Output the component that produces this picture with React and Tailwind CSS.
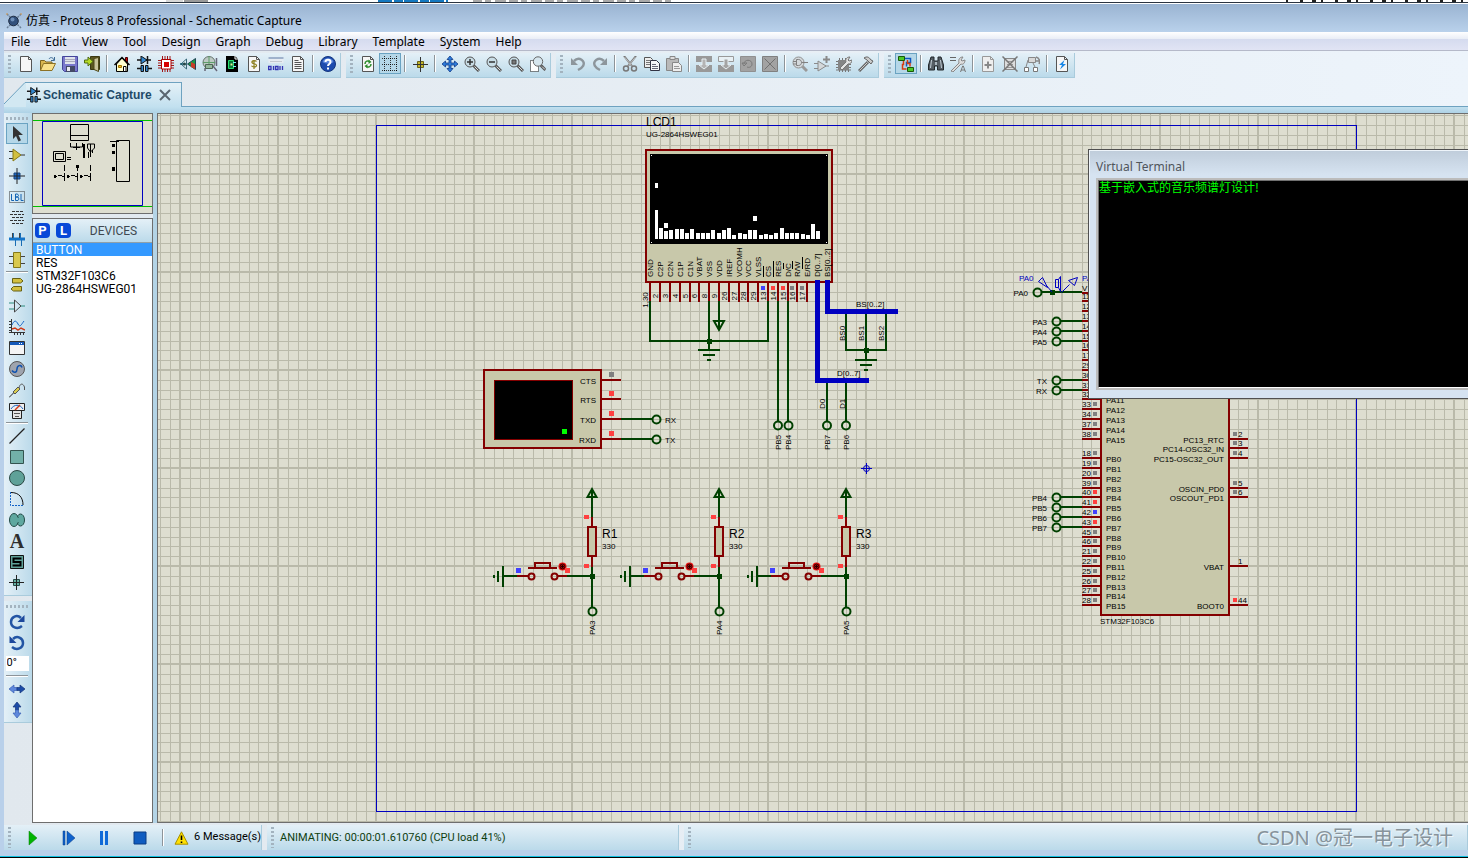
import React, { useState } from "react";

const RED = "#840000";
const GREEN = "#004000";
const BLUE = "#0000c0";
const BODY = "#c8c8aa";
const GRID = "#babaaa";

/* ---------- Iconos (16x16) ---------- */

const page = (
  <>
    <path d="M2.500 .5h8l3 3v12h-11z" fill="#f6f6f6" stroke="#555" />
    <path d="M10.500 .5v3h3" fill="none" stroke="#555" />
  </>
);

const grayPage = (
  <>
    <path d="M2.500 .5h8l3 3v12h-11z" fill="#eee" stroke="#999" />
    <path d="M10.500 .5v3h3" fill="none" stroke="#999" />
  </>
);

const lens = (
  <>
    <path d="M9.500 9.500l5.500 5.500" stroke="#555" strokeWidth="3" />
    <path d="M10.500 10.500l4 4" stroke="#ddd" strokeWidth="1" />
    <circle cx="6" cy="6" r="5" fill="#c9dde6" stroke="#555" />
  </>
);

const grayBlock = (
  <>
    <path d="M0 0h16v6H0zM0 9h16v7H0z" fill="#999" />
    <path d="M6 3h4v6h3l-5 4-5-4h3z" fill="#b4b4b4" stroke="#e6eef2" />
  </>
);

const icons = {
  newFile: page,
  open: (
    <>
      <path d="M.5 14.500V4.500h4l1.500 1.500h6v3" fill="#d8b650" stroke="#7d6520" />
      <path d="M.5 14.500l3-7h12l-3.500 7z" fill="#f8e08a" stroke="#8b7125" />
      <path d="M9 3c1-2 4-2 5 1M14.500 1v3.500H11" fill="none" stroke="#3f6a94" />
    </>
  ),
  save: (
    <>
      <path d="M.5 .5h15v15h-13l-2-2z" fill="#7a78cc" stroke="#45459a" />
      <path d="M3 1h10v7H3z" fill="#dfe3ec" />
      <path d="M3 3.500h10M3 5.500h10" stroke="#aab" />
      <path d="M4 10h9v6H4z" fill="#444a66" />
      <path d="M5 11h3v4H5z" fill="#e8e8f0" />
    </>
  ),
  exit: (
    <>
      <path d="M6.500 .5h9v13h-9z" fill="#5b5520" stroke="#3c3812" />
      <path d="M10 2.500l4.500-1v14l-4.500-2z" fill="#c9c39a" stroke="#4f4918" />
      <path d="M.5 4H4V1l5 4.500-5 4.500V7H.5z" fill="#b6dc28" stroke="#4f6b14" />
    </>
  ),
  home: (
    <>
      <path d="M11.500 1.500h2v6h-2z" fill="#d00000" stroke="#400" />
      <path d="M2.500 8v7.500h11V8L8 2z" fill="#ffffd0" stroke="#000" />
      <path d="M.5 9L8 1.500 15.500 9" fill="none" stroke="#000" strokeWidth="1.500" />
      <path d="M4.500 9.500h3v2h-3z" fill="#f4c020" stroke="#a07000" />
      <path d="M9.500 10.500h2.500v5H9.500z" fill="#fff" stroke="#000" />
    </>
  ),
  schematic: (
    <>
      <path d="M1 4h14" stroke="#111" strokeWidth="1.500" />
      <path d="M5 0v8l6-4z" fill="#3287d0" stroke="#111" />
      <path d="M11.500 0v8" stroke="#111" strokeWidth="1.500" />
      <path d="M1 12.500h4M12 12.500h4" stroke="#111" strokeWidth="1.500" />
      <path d="M5 9.500h2.500v6H5zM9.500 9.500H12v6H9.500z" fill="#3287d0" stroke="#111" />
    </>
  ),
  pcb: (
    <>
      <path d="M4.500 0v16M7 0v16M9.500 0v16M12 0v16M0 4.500h16M0 7h16M0 9.500h16M0 12h16" stroke="#a01818" />
      <path d="M3.500 3.500h9.500v9.500H3.500z" fill="#fff" stroke="#b00000" />
      <path d="M6 6h5v5H6z" fill="#d80000" />
    </>
  ),
  view3d: (
    <>
      <path d="M15.500 2.500v11L7.500 8z" fill="#189c48" stroke="#245" />
      <path d="M15 8l-4-2v5l4 2z" fill="#c83c28" />
      <path d="M6.500 3L1 8l5.500 5z" fill="#d9edf4" stroke="#3a6878" />
      <path d="M0 8h4" stroke="#165a6c" strokeWidth="1.500" />
      <circle cx="4.500" cy="8" r="1.500" fill="#244" />
    </>
  ),
  gerber: (
    <>
      <circle cx="7" cy="6.500" r="6" fill="#bdc9c4" stroke="#66746c" />
      <path d="M7 0v13M1 6.500h12" stroke="#5c9c68" />
      <path d="M11 10l4 5M3 12v3M14.500 2v8" stroke="#667" strokeWidth="1.500" fill="none" />
      <path d="M3.500 8.500h7v4h-7z" fill="#93b79b" stroke="#4e6656" />
    </>
  ),
  explorer: (
    <>
      <path d="M2 0h9l3 3v13H2z" fill="#000" />
      <path d="M4.500 4.500h5v8h-5z" fill="#0a7a3a" stroke="#28e070" />
      <path d="M9 6.500h3M9 10.500h3" stroke="#7ff0ff" />
      <path d="M6.500 7.500h2v2h-2z" fill="#e8f0a0" />
      <path d="M11 0v3h3" stroke="#fff" fill="none" />
    </>
  ),
  bom: (
    <>
      {page}
      <path d="M10.500 5.500c-1-1.500-5-1.200-4.500 1 .4 1.700 4.300.8 4.500 2.800.2 2-4 2.200-5 .5M8 4v9" fill="none" stroke="#8a7c18" strokeWidth="1.200" />
    </>
  ),
  source: (
    <>
      <path d="M.5 1h15v6H.5z" fill="#e6ebf2" />
      <path d="M.5 1h15v2H.5z" fill="#9fb2cc" />
      <path d="M.5 10.500h2.500v3H.5zM5.500 10v4M7.500 10.500H10v3H7.500zM12 10v4M14.500 10v4" fill="none" stroke="#3434b4" strokeWidth="1.300" />
      <path d="M2 5.500h12" stroke="#c3c8d0" />
    </>
  ),
  notes: (
    <>
      {page}
      <path d="M4.500 4.500h4M4.500 6.500h7M4.500 8.500h7M4.500 10.500h7M4.500 12.500h7" stroke="#555" />
    </>
  ),
  help: (
    <>
      <circle cx="8" cy="8" r="7.500" fill="#1e4cae" stroke="#14357e" />
      <path d="M2.500 6c1-5 10-5 11 0-3 2-8 2-11 0z" fill="#5e88dc" />
      <path d="M5.500 6c0-3 5-3 5 0 0 2-2.500 2-2.500 4M8 11.500v2" fill="none" stroke="#fff" strokeWidth="2" />
    </>
  ),
  redraw: (
    <>
      {page}
      <path d="M5 8c0-3 3-4 5-2M11 8c0 3-3 4-5 2" fill="none" stroke="#2c8c2c" strokeWidth="1.500" />
      <path d="M8.500 3.500l3 2.500-3 2zM7.500 12.500l-3-2.500 3-2z" fill="#2c8c2c" />
    </>
  ),
  grid: (
    <>
      <path
        d="M0 2.500h16M0 8.500h16M0 14.500h16M2.500 0v16M8.500 0v16M14.500 0v16"
        stroke="#333"
        strokeDasharray="1 1"
      />
      <path d="M2 2h1v1H2zM8 2h1v1H8zM14 2h1v1h-1zM2 8h1v1H2zM8 8h1v1H8zM14 8h1v1h-1zM2 14h1v1H2zM8 14h1v1H8zM14 14h1v1h-1z" fill="#000" />
    </>
  ),
  origin: (
    <>
      <path d="M8.500 1v15M1 8.500h15" stroke="#333" />
      <path d="M5.500 5.500h6v6h-6z" fill="#c2b52c" stroke="#6c6414" />
      <path d="M8.500 5v7M5 8.500h7" stroke="#333" />
    </>
  ),
  pan: (
    <path
      d="M8 0l3 3.500H9V7h3.500V5L16 8l-3.500 3V9H9v3.500h2L8 16l-3-3.500h2V9H3.500v2L0 8l3.500-3v2H7V3.500H5z"
      fill="#2d7ddc"
      stroke="#123a86"
      strokeWidth=".8"
    />
  ),
  zoomIn: (
    <>
      {lens}
      <path d="M3 6h6M6 3v6" stroke="#333" strokeWidth="1.500" />
    </>
  ),
  zoomOut: (
    <>
      {lens}
      <path d="M3 6h6" stroke="#333" strokeWidth="1.500" />
    </>
  ),
  zoomAll: (
    <>
      {lens}
      <path d="M4 4h4v4H4z" fill="#777" stroke="#444" />
    </>
  ),
  zoomArea: (
    <>
      <path d="M.5 4.500h8v11h-8z" fill="#fff" stroke="#111" strokeDasharray="1 1" />
      <path d="M11 9.500l4.500 4.500" stroke="#555" strokeWidth="3" />
      <path d="M12 10.500l3 3" stroke="#ddd" />
      <circle cx="8" cy="5.500" r="4.700" fill="#d6e6ee" stroke="#666" />
    </>
  ),
  undo: (
    <>
      <path d="M4 5c5-5 12 0 9 5-1 2-3 3-5 4" fill="none" stroke="#8d969c" strokeWidth="2.500" />
      <path d="M1 2v7h7z" fill="#8d969c" />
    </>
  ),
  redo: (
    <>
      <path d="M12 5C7 0 0 5 3 10c1 2 3 3 5 4" fill="none" stroke="#8d969c" strokeWidth="2.500" />
      <path d="M15 2v7H8z" fill="#8d969c" />
    </>
  ),
  cut: (
    <>
      <path d="M2 0l8 10M14 0L6 10" stroke="#777" strokeWidth="2" />
      <path d="M2.500 1l7 8.500M13.500 1l-7 8.500" stroke="#ddd" strokeWidth=".7" />
      <circle cx="4" cy="12.500" r="2.500" fill="none" stroke="#777" strokeWidth="1.500" />
      <circle cx="12" cy="12.500" r="2.500" fill="none" stroke="#777" strokeWidth="1.500" />
    </>
  ),
  copy: (
    <>
      <path d="M.5 1.500h6l2 2v8h-8z" fill="#eee" stroke="#555" />
      <path d="M2 4.500h4M2 6.500h5M2 8.500h5" stroke="#777" />
      <path d="M6.500 4.500h6l3 3v7h-9z" fill="#f4f4f8" stroke="#334" />
      <path d="M8 8.500h4M8 10.500h6M8 12.500h6" stroke="#667" />
    </>
  ),
  paste: (
    <>
      <path d="M.5 2.500h12v12H.5z" fill="#b9b9b9" stroke="#888" />
      <path d="M4 .5h5v3H4z" fill="#ddd" stroke="#888" />
      <path d="M6.500 6.500h6l3 3v6h-9z" fill="#eee" stroke="#888" />
      <path d="M8 10.500h5M8 12.500h6" stroke="#999" />
    </>
  ),
  blockCopy: grayBlock,
  blockMove: (
    <>
      <path d="M.5 .5h15v5H.5z" fill="#e8f0f4" stroke="#999" />
      <path d="M0 9h16v7H0z" fill="#999" />
      <path d="M6 3h4v6h3l-5 4-5-4h3z" fill="#a4a4a4" stroke="#e6eef2" />
    </>
  ),
  blockRotate: (
    <>
      <path d="M.5 .5h15v15H.5z" fill="#a2a2a2" stroke="#909090" />
      <path d="M4 8c0-5 8-5 8 0 0 3-3 4-5 3M2 7l2 3 3-3z" fill="none" stroke="#7a7a7a" />
    </>
  ),
  blockDelete: (
    <>
      <path d="M.5 .5h15v15H.5z" fill="#a2a2a2" stroke="#808080" />
      <path d="M2.500 2.500l11 11M13.500 2.500l-11 11" stroke="#707070" />
    </>
  ),
  pick: (
    <>
      <path d="M10 10l5 5" stroke="#999" strokeWidth="3" />
      <circle cx="6.500" cy="6.500" r="5.500" fill="#d4d9dc" stroke="#909090" />
      <path d="M4.500 3.500v6h2c4 0 4-6 0-6zM1 5.500h3M1 8h3M9.500 6.500H16" fill="none" stroke="#808080" />
    </>
  ),
  makeDevice: (
    <>
      <path d="M4 5v10l8-5zM0 7.500h4M0 12.500h4M11 10h4" fill="#d4d8da" stroke="#8a8a8a" />
      <path d="M12.500 0v7M9 3.500h7" stroke="#8a8a8a" strokeWidth="2" />
    </>
  ),
  packaging: (
    <>
      <path d="M3.500 2v14M6.500 2v14M9.500 2v14M12.500 2v14M0 5.500h15M0 8.500h15M0 11.500h15M0 14h15" stroke="#777" />
      <path d="M2 4h11v10H2z" fill="#858585" />
      <path d="M4 12l6-6c-1-3 1-5 4-5l-2 3 1 1 3-1c0 3-2 4-4 4l-6 6z" fill="#e4e4e4" stroke="#777" />
    </>
  ),
  decompose: (
    <>
      <path d="M1 15l9-9" stroke="#666" strokeWidth="3" />
      <path d="M1.500 14.500l8-8" stroke="#ccc" />
      <path d="M6 2c3-2 5-1 7 2l2 1-2 3-3-3-1-1z" fill="#ccc" stroke="#666" />
    </>
  ),
  autorouter: (
    <>
      <path d="M7 2.500h5.500v4H8.500v4" fill="none" stroke="#0c56c0" strokeWidth="1.500" />
      <path d="M9.500 4v3.500h2.500v3M5.500 5v3.500h-1v4.500h4" fill="none" stroke="#d63c10" strokeWidth="1.500" />
      <path d="M.5 .5h6v4h-6zM9.500 11.500h6v4h-6z" fill="#4cc828" stroke="#185808" />
    </>
  ),
  search: (
    <>
      <path d="M3 1h3v4h4V1h3l2.500 8v5h-6v-4H6.500v4h-6V9z" fill="#555d64" stroke="#22282c" />
      <path d="M3.500 4l-1 8M12.500 4l1 8" stroke="#c3d0d8" />
      <path d="M7 6h2v3H7z" fill="#aab6be" />
    </>
  ),
  property: (
    <>
      <path d="M0 1.500h6M0 4.500h6" stroke="#666" />
      <path d="M1 15l8-8c-1-4 1-6 4-6l-2 3 1 1 3-1c0 3-2 5-4 4l-8 8z" fill="#ddd" stroke="#888" />
      <path d="M10.500 16l2.200-6h.6l2.200 6M11 14h4" fill="none" stroke="#777" />
    </>
  ),
  addSheet: (
    <>
      {grayPage}
      <path d="M8 5.500v7M4.500 9h7" stroke="#888" strokeWidth="2" />
    </>
  ),
  removeSheet: (
    <>
      <path d="M2.500 2.500h11v11h-11z" fill="#ddd" stroke="#888" />
      <path d="M5 5.500h6M5 8.500h6M5 11.500h6" stroke="#999" />
      <path d="M.5 .5l15 15M15.500 .5l-15 15" stroke="#777" strokeWidth="1.500" />
    </>
  ),
  hierarchy: (
    <>
      <path d="M4.500 1.500h7v5h-7z" fill="#d8d8d8" stroke="#888" />
      <path d="M4 4l-2 7M9 7l2 4" stroke="#888" />
      <path d="M.5 11.500h4v4h-4zM9.500 11.500h4v4h-4z" fill="#fff" stroke="#777" />
      <path d="M12 1c4 1 4 5 3 7M12 5h4" fill="none" stroke="#888" strokeWidth="1.500" />
    </>
  ),
  erc: (
    <>
      {page}
      <path d="M10.500 4L5 9h3l-2 4.500L12 8H9z" fill="#1a88e8" />
    </>
  ),

  /* barra lateral */
  select: <path d="M4 0v13l3-3 2.500 5.500 2.500-1.200L9.500 9H14z" fill="#333" />,
  component: (
    <>
      <path d="M0 4.500h4M0 11.500h4M11 8h5" stroke="#333" />
      <path d="M4 2v12l8-6z" fill="#d2c040" stroke="#8a7c18" />
    </>
  ),
  junction: (
    <>
      <path d="M8 0v16M0 8h16" stroke="#222" />
      <path d="M5 5h6v6H5z" fill="#1d6ac8" stroke="#1b4276" />
      <path d="M8 5v6M5 8h6" stroke="#222" />
    </>
  ),
  label: (
    <>
      <path d="M.5 2.500h15v11H.5z" fill="none" stroke="#333" strokeDasharray="1 1" />
      <path d="M2.500 5v6.500H5M6.500 5v6.500h2.500l1-1.500-1-2h-2.500 2l1-1.500-1-1.500zM12 5v6.500h2.500" fill="none" stroke="#1464b4" />
    </>
  ),
  script: (
    <path
      d="M3 1.500h11M1 4.500h14M3 7.500h11M1 10.500h14M3 13.500h11"
      stroke="#333"
      strokeDasharray="3 1"
    />
  ),
  bus: (
    <>
      <path d="M4.500 2v6M11.500 2v6M6.500 8v7M12.500 8v7" stroke="#1a6db2" />
      <path d="M0 8h16" stroke="#1474c8" strokeWidth="3" />
      <path d="M3.500 2v5M10.500 2v5" stroke="#444" />
    </>
  ),
  subcircuit: (
    <>
      <path d="M0 4.500h4M0 11.500h4M12 4.500h4M12 11.500h4" stroke="#444" />
      <path d="M4.500 .5h7v15h-7z" fill="#d8c84c" stroke="#857818" />
    </>
  ),
  terminals: (
    <>
      <path d="M3.500 1.500h8l2.500 2.500-2.500 2h-8z" fill="#d2c040" stroke="#666014" />
      <path d="M12.500 9.500h-8L2 12l2.500 2h8z" fill="#d2c040" stroke="#666014" />
    </>
  ),
  pins: (
    <>
      <path d="M0 5h5M0 11h5M12 8h4" stroke="#2b8a7c" />
      <path d="M5.500 2v12L12 8z" fill="none" stroke="#444" />
    </>
  ),
  graph: (
    <>
      <path d="M2.500 0v14M0 13.500h16M0 2.500h2M0 5.500h2M0 8.500h2M0 11.500h2M5.500 14v2M8.500 14v2M11.500 14v2M14.500 14v2" stroke="#333" />
      <path d="M3 6c2-5 4-5 6-1s3 1 6-3" fill="none" stroke="#1464c8" />
      <path d="M3 10l3-1 3 2 3-2 4 2" fill="none" stroke="#d03818" strokeWidth="1.500" />
    </>
  ),
  tape: (
    <>
      <path d="M.5 1.500h15v13H.5z" fill="#f4f4f4" stroke="#333" />
      <path d="M1 2h14v3H1z" fill="#1458b8" />
      <path d="M10 3.500h4" stroke="#fff" strokeDasharray="1 1" />
    </>
  ),
  generator: (
    <>
      <circle cx="8" cy="8" r="7.500" fill="#9fa4ae" stroke="#555" />
      <path d="M3 9.500c2 3 5 2 5-1.500S12 3 13 6.500" fill="none" stroke="#0f52b0" strokeWidth="1.500" />
    </>
  ),
  probe: (
    <>
      <path d="M0 15.500l5-5" stroke="#222" />
      <path d="M4 10l5-5 2 2-5 5z" fill="#d8cc50" stroke="#555" />
      <path d="M10 6c1-5 4-5 5.500-1v3" fill="none" stroke="#555" />
    </>
  ),
  instrument: (
    <>
      <path d="M.5 .5h15v7h-15z" fill="#eee" stroke="#222" />
      <path d="M2 6c3-5 9-5 12 0" fill="none" stroke="#1464c8" />
      <path d="M6 7l5-5" stroke="#d03818" strokeWidth="1.500" />
      <path d="M3.500 8v7.500h9V8" fill="#e4e4e4" stroke="#222" />
      <path d="M5 10.500h6M6 13.500h4" stroke="#555" />
    </>
  ),
  line: <path d="M.5 15.500l15-15" stroke="#222" strokeWidth="1.300" />,
  box: <path d="M1.500 1.500h13v13h-13z" fill="#72b0a8" stroke="#33534f" />,
  circle: <circle cx="8" cy="8" r="7.500" fill="#5fa198" stroke="#2b4844" />,
  arc: (
    <>
      <path d="M1.500 1v13.500H14" fill="none" stroke="#1464c8" strokeDasharray="2 1" />
      <path d="M2 1.500c8 0 12 5 12 12.500" fill="none" stroke="#111" />
    </>
  ),
  path: (
    <>
      <ellipse cx="11.500" cy="8" rx="4" ry="6" fill="#5fa8a0" stroke="#234a46" />
      <ellipse cx="5" cy="8" rx="4.500" ry="6.500" fill="#5fa8a0" stroke="#234a46" />
      <path d="M8 6h3v4H8z" fill="#5fa8a0" />
    </>
  ),
  symbol: (
    <>
      <path d="M1.500 1.500h13v13h-13z" fill="#5fa198" stroke="#111" />
      <path d="M12.500 4.500h-8v3.500h7v3.500h-8" fill="none" stroke="#000" strokeWidth="2" />
    </>
  ),
  marker: (
    <>
      <path d="M7.500 0v15M0 7.500h15" stroke="#222" />
      <path d="M4.500 4.500h6v6h-6z" fill="#66b0a4" stroke="#234a46" />
      <path d="M7.500 4v7M4 7.500h7" stroke="#222" />
    </>
  ),
  rotateCw: (
    <>
      <path d="M12 4C8 0 2 3 2 8s6 8 11 4" fill="none" stroke="#2355a4" strokeWidth="2.500" />
      <path d="M15.500 1v7h-7z" fill="#1c489c" />
    </>
  ),
  rotateCcw: (
    <>
      <path d="M4 4c4-4 10-1 10 4s-6 8-11 4" fill="none" stroke="#2355a4" strokeWidth="2.500" />
      <path d="M.5 1v7h7z" fill="#1c489c" />
    </>
  ),
  flipH: (
    <>
      <path d="M0 8l5-4v2.500h3v3H5V12z" fill="#5e88dc" stroke="#3a60b4" strokeWidth=".7" />
      <path d="M16 8l-5-4v2.500H8v3h3V12z" fill="#1c4ca8" stroke="#143478" strokeWidth=".7" />
    </>
  ),
  flipV: (
    <>
      <path d="M8 0l4 5H9.500v3h-3V5H4z" fill="#1c4ca8" stroke="#143478" strokeWidth=".7" />
      <path d="M8 16l4-5H9.500V8h-3v3H4z" fill="#5e88dc" stroke="#3a60b4" strokeWidth=".7" />
    </>
  ),
};

const Icon = ({ name }) => (
  <svg width="16" height="16" viewBox="0 0 16 16" fill="none" aria-hidden="true">
    {icons[name]}
  </svg>
);

/* ---------- Barras de herramientas ---------- */

const toolbars = [
  [
    "newFile", "open", "save", "exit", "|",
    "home", "schematic", "pcb", "view3d", "gerber", "explorer", "bom", "source", "notes", "|",
    "help",
  ],
  ["redraw", "grid", "|", "origin", "|", "pan", "zoomIn", "zoomOut", "zoomAll", "zoomArea"],
  [
    "undo", "redo", "|", "cut", "copy", "paste", "|",
    "blockCopy", "blockMove", "blockRotate", "blockDelete", "|",
    "pick", "makeDevice", "packaging", "decompose",
  ],
  ["autorouter", "|", "search", "property", "|", "addSheet", "removeSheet", "hierarchy", "|", "erc"],
];

const modes = [
  "select", "component", "junction", "label", "script", "bus", "subcircuit", "|",
  "terminals", "pins", "graph", "tape", "generator", "probe", "instrument", "|",
  "line", "box", "circle", "arc", "path", "text", "symbol", "marker",
];

const menus = [
  "File", "Edit", "View", "Tool", "Design", "Graph", "Debug", "Library", "Template", "System", "Help",
];

const devices = ["BUTTON", "RES", "STM32F103C6", "UG-2864HSWEG01"];

const ToolButton = ({ name, active, onClick }) => (
  <button
    onClick={onClick}
    aria-label={name}
    className={`flex h-[21px] w-[22px] shrink-0 items-center justify-center ${
      active ? "border border-[#6aa3c2] bg-[#b5d7e8]" : ""
    }`}
  >
    {name === "text" ? (
      <span className="font-['Liberation_Serif',serif] text-[20px] leading-5 font-bold text-[#2e2e2e]">A</span>
    ) : (
      <Icon name={name} />
    )}
  </button>
);

const Grip = () => (
  <div className="flex w-[11px] shrink-0 justify-center self-stretch py-0.5">
    <div className="w-[3px] bg-[repeating-linear-gradient(to_bottom,#a3b3bf_0_2px,transparent_2px_4px)]" />
  </div>
);

const GripH = () => (
  <div className="flex h-2.5 w-full shrink-0 items-center pl-0.5">
    <div className="h-[3px] w-full bg-[repeating-linear-gradient(to_right,#a3b3bf_0_2px,transparent_2px_4px)]" />
  </div>
);

const Toolbar = ({ items }) => {
  const [grid, setGrid] = useState(true);
  return (
    <div className="flex h-[25px] items-start border-r border-b border-[#a9cbdc] bg-linear-to-b from-[#e4f0f7] to-[#bbdaea] pr-px">
      <Grip />
      {items.map((name, i) =>
        name === "|" ? (
          <div key={i} className="mx-[3px] mt-0.5 h-[17px] w-0.5 border-l border-[#8d9499] bg-white" />
        ) : (
          <ToolButton
            key={name}
            name={name}
            active={name === "autorouter" || (name === "grid" && grid)}
            onClick={name === "grid" ? () => setGrid(!grid) : undefined}
          />
        )
      )}
    </div>
  );
};

const ModeBar = () => {
  const [mode, setMode] = useState("select");
  return (
    <div className="flex w-7 shrink-0 flex-col gap-[5px]">
      <div className="flex flex-col items-center border-b border-[#a9cbdc] bg-linear-to-r from-[#e4f0f7] to-[#bbdaea] pr-0.5 pb-0.5">
        <GripH />
        {modes.map((name, i) =>
          name === "|" ? (
            <div key={i} className="my-px h-0.5 w-[22px] border-t border-[#8d9499] bg-white" />
          ) : (
            <ToolButton
              key={name}
              name={name}
              active={mode === name}
              onClick={() => setMode(name)}
            />
          )
        )}
      </div>
      <div className="flex flex-col items-center border-b border-[#a9cbdc] bg-linear-to-r from-[#e4f0f7] to-[#bbdaea] pr-0.5 pb-0.5">
        <GripH />
        <ToolButton name="rotateCw" />
        <ToolButton name="rotateCcw" />
        <input
          aria-label="Angle"
          defaultValue="0°"
          className="my-[3px] h-[15px] w-[23px] bg-white px-px font-[Roboto,sans-serif] text-[11px] text-black outline-none"
        />
        <div className="my-px h-0.5 w-[22px] border-t border-[#8d9499] bg-white" />
        <ToolButton name="flipH" />
        <ToolButton name="flipV" />
      </div>
    </div>
  );
};

/* ---------- Panel de dispositivos ---------- */

const Overview = () => (
  <svg className="block h-[101px] w-full border border-[#6e6e6e] bg-[#deded0]">
    <g transform="translate(-33 -114)" fill="none" stroke="#000">
      <path d="M33 120.500h119M33 206.500h119" stroke="#00c000" />
      <path d="M42.500 121.500h100v84h-100z" stroke={BLUE} />
      <path d="M70.500 124.500h18v16h-18zM70 135.500h18" />
      <path d="M53.500 151.500h12v10h-12zM55.500 153.500h8v6h-8zM67 157.500h4M67 159.500h4" />
      <path d="M70.500 143v4h12v-4M76.500 143v7M73 147.500h7M83.500 144v13" />
      <path d="M84 144v14" strokeWidth="2" />
      <path d="M87.500 144v4l3 4 4-4v-4zM90.500 144v13M88.500 152v6M92.500 150v3" />
      <path d="M110 141.500h9M116.500 140.500h13v41h-13z" />
      <path d="M112 144h3v3h-3zM112 151h3v3h-3zM112 167h3v4h-3z" fill="#000" stroke="none" />
      {[0, 13, 26].map((dx) => (
        <g key={dx} transform={`translate(${dx} 0)`}>
          <path d="M64.500 165v6M64.500 173v8M54 176.500h3M58 175.500h4M62 176.500h2" />
        </g>
      ))}
      <path d="M54 175h2v3h-2zM67 175h2v3h-2zM80 175h2v3h-2zM76 165h3v3h-3z" fill="#000" stroke="none" />
    </g>
  </svg>
);

const DevicePanel = () => {
  const [selected, setSelected] = useState("BUTTON");
  return (
    <div className="flex w-[121px] shrink-0 flex-col gap-1 font-[Roboto,sans-serif] text-[12px]">
      <Overview />
      <div className="flex min-h-0 flex-1 flex-col border border-[#6e6e6e] bg-white">
        <div className="flex h-6 shrink-0 items-center gap-1.5 border-b border-[#8fa0a8] bg-linear-to-b from-[#e4f0f7] to-[#bbdaea] px-0.5">
          <button className="h-[15px] w-[15px] rounded-sm bg-[#0848d8] text-center text-[13px] leading-[15px] font-bold text-white">
            P
          </button>
          <button className="h-[15px] w-[15px] rounded-sm bg-[#0848d8] text-center text-[13px] leading-[15px] font-bold text-white">
            L
          </button>
          <span className="flex-1 text-center text-[#404850]">DEVICES</span>
        </div>
        <ul>
          {devices.map((d) => (
            <li key={d}>
              <button
                onClick={() => setSelected(d)}
                className={`block h-[13px] w-full pl-[3px] text-left leading-[15px] whitespace-nowrap ${
                  selected === d ? "bg-[#3399ff] text-white" : "text-black"
                }`}
              >
                {d}
              </button>
            </li>
          ))}
        </ul>
      </div>
    </div>
  );
};

/* ---------- Esquema ---------- */

const stateColor = { r: "#ff4040", b: "#4040ff", g: "#808080" };

const State = ({ x, y, s, w = 4, h = 4 }) => (
  <rect x={x} y={y} width={w} height={h} fill={stateColor[s]} />
);

const VText = ({ x, y, children, anchor = "start" }) => (
  <text transform={`translate(${x} ${y}) rotate(-90)`} textAnchor={anchor}>
    {children}
  </text>
);

const minor = [10, 20, 29, 39, 49, 59, 69, 78, 88];

const SheetGrid = () => (
  <>
    <defs>
      <pattern id="sheet-grid" x="22" y="60" width="98" height="98" patternUnits="userSpaceOnUse">
        <rect width="98" height="98" fill="#deded0" />
        <g fill={GRID}>
          {minor.map((n) => (
            <g key={n}>
              <rect x={n} width="1" height="98" />
              <rect y={n} width="98" height="1" />
            </g>
          ))}
          <rect width="1" height="98" />
          <rect x="97" width="1" height="98" />
          <rect width="98" height="1" />
          <rect y="97" width="98" height="1" />
        </g>
      </pattern>
    </defs>
    <rect width="100%" height="100%" fill="url(#sheet-grid)" />
  </>
);

// x, nombre, numero, estado, tramo con barra [desde, hasta]
const lcdPins = [
  [650, "GND", "1,30"],
  [660, "C2P", "2"],
  [670, "C2N", "3"],
  [680, "C1P", "4"],
  [690, "C1N", "5"],
  [699, "VBAT", "6"],
  [709, "VSS", "8"],
  [719, "VDD", "9"],
  [729, "IREF", "26"],
  [739, "VCOMH", "27"],
  [748, "VCC", "28"],
  [758, "VLSS", "29"],
  [768, "CS", "13", "b", [266, 277]],
  [778, "RES", "14", "r", [261, 277]],
  [788, "D/C", "15", "r", [263, 269]],
  [797, "R/W", "16", "g", [261, 269]],
  [807, "E/RD", "17", "g", [257, 269]],
];

// columnas del espectro: x, altura
const bars = [
  [655, 29], [659, 11], [664, 8], [669, 9], [675, 10], [680, 10], [685, 6], [690, 10],
  [696, 6], [701, 6], [706, 6], [711, 9], [717, 6], [722, 9], [727, 11], [732, 4],
  [738, 6], [743, 5], [748, 9], [753, 9], [759, 4], [764, 5], [769, 4], [774, 6],
  [780, 11], [785, 6], [790, 6], [795, 6], [801, 5], [806, 4], [811, 15], [816, 8],
];

const Lcd = () => (
  <g>
    <text x="646" y="126" className="text-[12px]">LCD1</text>
    <text x="646" y="137">UG-2864HSWEG01</text>
    <rect x="646" y="150" width="186" height="132" fill={BODY} stroke={RED} strokeWidth="2" />
    <rect x="650" y="154" width="178" height="90" fill="#000" />
    <path d="M651 155h1v1h-1zM826 155h1v1h-1zM651 242h1v1h-1zM826 242h1v1h-1z" fill="#fff" />
    <g fill="#fff">
      {bars.map(([x, h]) => (
        <rect key={x} x={x} y={239 - h} width={x === 655 ? 3 : 4} height={h} />
      ))}
      <rect x="655" y="183" width="3" height="5" />
      <rect x="664" y="223" width="4" height="5" />
      <rect x="753" y="216" width="4" height="5" />
    </g>
    {lcdPins.map(([x, name, num, s, over]) => (
      <g key={num}>
        <path d={`M${x} 282v20`} stroke={RED} strokeWidth="2" />
        <VText x={x + 3} y={277}>{name}</VText>
        <VText x={x - 2} y={num === "1,30" ? 300 : 296} anchor="middle">{num}</VText>
        {s && <State x={x - 7} y={286} s={s} />}
        {over && <path d={`M${x - 4.5} ${over[0]}V${over[1]}`} stroke="#000" />}
      </g>
    ))}
    <VText x={820} y={277}>D[0..7]</VText>
    <VText x={830} y={277}>BS[0..2]</VText>
  </g>
);

const Node = ({ x, y }) => <rect x={x - 2} y={y - 2} width="5" height="5" fill={GREEN} />;

const Port = ({ x, y }) => (
  <circle cx={x} cy={y} r="4" fill="none" stroke={GREEN} strokeWidth="2" />
);

const Ground = ({ x, y }) => (
  <path
    d={`M${x - 11} ${y}h22M${x - 6} ${y + 5}h12M${x - 2} ${y + 10}h4`}
    stroke={GREEN}
    strokeWidth="2"
  />
);

const Wiring = () => (
  <g fill="none">
    <g stroke={GREEN} strokeWidth="2">
      <path d="M650 301v40h118v-40M709 301v48M719 301v29" />
      <path d="M714 321h10l-5 9z" />
      <path d="M778 301v121M788 301v121" />
      <path d="M846 312v38h40v-38M866 312v48" />
      <path d="M827 380v42M846 380v42" />
    </g>
    <Node x={709} y={341} />
    <Node x={866} y={350} />
    <Ground x={709} y={350} />
    <Ground x={866} y={360} />
    <Port x={778} y={425.500} />
    <Port x={788.500} y={425.500} />
    <Port x={827} y={425.500} />
    <Port x={846} y={425.500} />
    <g stroke={BLUE} strokeWidth="5">
      <path d="M817.500 280v100.500h51.500" />
      <path d="M827.500 280v31.500h70.500" />
    </g>
    <g fill="#000">
      <text x="856" y="307">BS[0..2]</text>
      <text x="837" y="376">D[0..7]</text>
      <VText x={845} y={341}>BS0</VText>
      <VText x={864} y={341}>BS1</VText>
      <VText x={884} y={341}>BS2</VText>
      <VText x={825} y={409}>D0</VText>
      <VText x={845} y={409}>D1</VText>
      <VText x={781} y={450}>PB5</VText>
      <VText x={791} y={450}>PB4</VText>
      <VText x={830} y={450}>PB7</VText>
      <VText x={849} y={450}>PB6</VText>
    </g>
    <g stroke={BLUE}>
      <circle cx="866.500" cy="468.500" r="3" />
      <path d="M861 468.500h11M866.500 463v11" />
    </g>
  </g>
);

const uartPins = [
  [380, "CTS", "g"],
  [399, "RTS", "r"],
  [419, "TXD", "r", "RX"],
  [439, "RXD", "r", "TX"],
];

const UartTerminal = () => (
  <g>
    <rect x="484" y="370" width="117" height="78" fill={BODY} stroke={RED} strokeWidth="2" />
    <rect x="494.500" y="380.500" width="78" height="59" fill="#000" stroke={RED} />
    <rect x="562" y="429" width="5" height="5" fill="#00ff00" />
    {uartPins.map(([y, name, s, net]) => (
      <g key={name}>
        <path d={`M601 ${y}h20`} stroke={RED} strokeWidth="2" />
        <text x="596" y={y + 4} textAnchor="end">{name}</text>
        <State x={609} y={y - 8} s={s} w={5} h={5} />
        {net && (
          <>
            <path d={`M621 ${y}h31`} stroke={GREEN} strokeWidth="2" />
            <Port x={656.500} y={y + 0.500} />
            <text x="665" y={y + 4}>{net}</text>
          </>
        )}
      </g>
    ))}
  </g>
);

const KeyCircuit = ({ dx, res, net }) => (
  <g transform={`translate(${dx} 0)`} fill="none" strokeWidth="2">
    <g stroke={GREEN}>
      <path d="M592 490v27M587.500 497h9l-4.500-8z" />
      <path d="M592 566v41M567 576h25" />
      <path d="M503 566v21M498 571v11M494 575v3M503 576h14" />
    </g>
    <g stroke={RED}>
      <path d="M592 517v10M592 556v11M517 576h11M558 576h9" />
      <rect x="588" y="527" width="8" height="29" fill={BODY} />
      <circle cx="531.500" cy="576.500" r="3" />
      <circle cx="554.500" cy="576.500" r="3" />
      <path d="M528 568h29M535 568v-5h15v5" />
    </g>
    <circle cx="562.500" cy="566.500" r="4" fill="#e81010" />
    <circle cx="562.500" cy="566.500" r="2.500" fill="#b00000" stroke="#300000" strokeWidth="1" />
    <path d="M561 566.500h3M562.500 565v3" stroke="#200" strokeWidth="1" />
    <Node x={592} y={576} />
    <Port x={592.500} y={611.500} />
    <State x={584} y={515} s="r" w={5} />
    <State x={584} y={564} s="r" w={5} />
    <State x={516} y={568} s="b" w={5} h={5} />
    <State x={565} y={568} s="r" w={5} h={5} />
    <g fill="#000">
      <text x="602" y="538" className="text-[12px]">{res}</text>
      <text x="602" y="549">330</text>
      <VText x={595} y={635}>{net}</VText>
    </g>
  </g>
);

// y, numero, nombre, estado
const mcuLeft = [
  [293, "V"],
  [301, "11"],
  [311, "12"],
  [321, "13"],
  [331, "14"],
  [341, "15"],
  [350, "16"],
  [360, "17"],
  [370, "29"],
  [380, "30"],
  [390, "31"],
  [399, "32", "PA11", "g"],
  [409, "33", "PA12", "g"],
  [419, "34", "PA13", "g"],
  [429, "37", "PA14", "g"],
  [439, "38", "PA15", "g"],
  [458, "18", "PB0", "g"],
  [468, "19", "PB1", "g"],
  [478, "20", "PB2", "g"],
  [488, "39", "PB3", "g"],
  [497, "40", "PB4", "r"],
  [507, "41", "PB5", "r"],
  [517, "42", "PB6", "b"],
  [527, "43", "PB7", "r"],
  [537, "45", "PB8", "g"],
  [546, "46", "PB9", "g"],
  [556, "21", "PB10", "g"],
  [566, "22", "PB11", "g"],
  [576, "25", "PB12", "g"],
  [586, "26", "PB13", "g"],
  [595, "27", "PB14", "g"],
  [605, "28", "PB15", "g"],
];

const mcuRight = [
  [439, "2", "PC13_RTC", "g"],
  [448, "3", "PC14-OSC32_IN", "g"],
  [458, "4", "PC15-OSC32_OUT", "g"],
  [488, "5", "OSCIN_PD0", "g"],
  [497, "6", "OSCOUT_PD1", "g"],
  [566, "1", "VBAT"],
  [605, "44", "BOOT0", "r"],
];

const mcuNets = [
  [321, "PA3"],
  [331, "PA4"],
  [341, "PA5"],
  [380, "TX"],
  [390, "RX"],
  [497, "PB4"],
  [507, "PB5"],
  [517, "PB6"],
  [527, "PB7"],
];

const Mcu = () => (
  <g>
    <rect x="1101" y="282" width="128" height="333" fill={BODY} stroke={RED} strokeWidth="2" />
    {mcuLeft.map(([y, num, name, s]) => (
      <g key={num}>
        <path d={`M1082 ${y}h19`} stroke={RED} strokeWidth="2" />
        <text x="1082" y={y - 2}>{num}</text>
        {name && <text x="1106" y={y + 4}>{name}</text>}
        {s && <State x={1093} y={y - 7} s={s} />}
      </g>
    ))}
    {mcuRight.map(([y, num, name, s]) => (
      <g key={num}>
        <path d={`M1229 ${y}h19`} stroke={RED} strokeWidth="2" />
        <text x="1238" y={y - 2}>{num}</text>
        <text x="1224" y={y + 4} textAnchor="end">{name}</text>
        {s && <State x={1233} y={y - 7} s={s} />}
      </g>
    ))}
    {mcuNets.map(([y, net]) => (
      <g key={net}>
        <path d={`M1061 ${y}h21`} stroke={GREEN} strokeWidth="2" />
        <Port x={1056.500} y={y + 0.500} />
        <text x="1047" y={y + 4} textAnchor="end">{net}</text>
      </g>
    ))}
    <path d="M1042 292h40" stroke={GREEN} strokeWidth="2" />
    <Port x={1037.500} y={292.500} />
    <Node x={1052} y={292} />
    <text x="1028" y="296" textAnchor="end">PA0</text>
    <g fill={BLUE}>
      <text x="1019" y="281">PA0</text>
      <text x="1082" y="281">PA0</text>
    </g>
    <g fill="none" stroke={BLUE}>
      <path d="M1052 292l-6-7M1038.500 281.500l4-4 5 10zM1055.500 279.500h3v8h-3zM1058.500 279.500l2-3v15l-2-4" />
      <path d="M1061.500 292.500l8-8M1077.500 277.500l-3 8-6-5z" />
    </g>
    <text x="1100" y="624">STM32F103C6</text>
  </g>
);

const Schematic = () => (
  <svg className="absolute inset-0 block h-full w-full font-['Liberation_Sans',Arial,sans-serif] text-[8px]">
    <SheetGrid />
    <g transform="translate(-158 -114)">
      <rect x="376.500" y="125.500" width="980" height="686" fill="none" stroke={BLUE} />
      <Lcd />
      <Wiring />
      <UartTerminal />
      <KeyCircuit dx={0} res="R1" net="PA3" />
      <KeyCircuit dx={127} res="R2" net="PA4" />
      <KeyCircuit dx={254} res="R3" net="PA5" />
      <Mcu />
    </g>
  </svg>
);

const VirtualTerminal = () => (
  <section className="absolute top-[35px] right-0 left-[930px] flex h-[250px] flex-col border-y border-l border-[#505050] bg-linear-to-b from-[#bfccda] to-[#d6e3f1] to-10% pb-2 pl-[7px] shadow-[inset_1px_1px_0_#eef4fa]">
    <h2 className="h-7 shrink-0 pt-1 font-['Noto_Sans',sans-serif] text-[12px] leading-[26px] text-[#50555c]">
      Virtual Terminal
    </h2>
    <div className="flex-1 border-2 border-r-0 border-[#bcbcbc]">
      <div className="h-full border-t border-b border-l border-t-[#707070] border-b-white border-l-[#707070] bg-black font-['Noto_Sans_CJK_SC',sans-serif] text-[12px] leading-3 text-[#00ff00]">
        基于嵌入式的音乐频谱灯设计!
      </div>
    </div>
  </section>
);

/* ---------- Barra de estado ---------- */

const simButtons = [
  ["Play", <path d="M4 1l8 7-8 7z" fill="#00b400" stroke="#0a7a0a" strokeWidth=".5" />],
  [
    "Step",
    <g fill="#0f62cc" stroke="#0a3c84" strokeWidth=".5">
      <path d="M2 1h2v14H2z" />
      <path d="M6 1l8 7-8 7z" />
    </g>,
  ],
  ["Pause", <path d="M4 1h3v14H4zM9 1h3v14H9z" fill="#0f6ad8" />],
  ["Stop", <path d="M2 2h12v12H2z" fill="#0f5cc0" stroke="#0a3c84" />],
];

const bandClass =
  "flex h-[25px] items-center border-r border-[#a9cbdc] bg-linear-to-b from-[#e4f0f7] to-[#bbdaea]";

const StatusBar = () => (
  <footer className="flex shrink-0 gap-[5px] pt-0.5 font-[Roboto,sans-serif] text-[11px]">
    <div className={`${bandClass} w-[258px] whitespace-nowrap`}>
      <Grip />
      {simButtons.map(([name, shape]) => (
        <button key={name} aria-label={name} className="flex h-full w-9 items-center justify-center">
          <svg width="16" height="16" viewBox="0 0 16 16">{shape}</svg>
        </button>
      ))}
      <div className="mx-1 h-[17px] w-0.5 border-l border-[#8d9499] bg-white" />
      <button className="flex items-center gap-[5px] pl-[6px] text-black">
        <svg width="15" height="14" viewBox="0 0 15 14">
          <path d="M7.500 .8l6.500 12.400H1z" fill="#ffe000" stroke="#a89000" strokeLinejoin="round" />
          <path d="M7.500 4.500v4.500M7.500 10.500v1.500" stroke="#000" strokeWidth="1.600" />
        </svg>
        6 Message(s)
      </button>
    </div>
    <div className={`${bandClass} w-[412px] text-[#104010]`}>
      <Grip />
      <output className="pt-px pl-0.5 whitespace-nowrap">ANIMATING: 00:00:01.610760 (CPU load 41%)</output>
    </div>
    <div className={`${bandClass} flex-1 justify-between pr-3.5`}>
      <Grip />
      <span className="font-['Noto_Sans','Noto_Sans_CJK_SC',sans-serif] text-[20px] leading-6 whitespace-nowrap text-[#87939b] [text-shadow:1px_1px_0_#eef6fa]">
        CSDN @冠一电子设计
      </span>
    </div>
  </footer>
);

/* ---------- Ventana ---------- */

// borde inferior de la ventana que queda detras
const BackgroundEdge = () => (
  <svg className="block h-0.5 w-full shrink-0 bg-white">
    <rect x="166" width="17" height="2" fill="#d8d8d8" />
    <rect x="184" width="24" height="2" fill="#9a9a9a" />
    <path d="M378 1h70" stroke="#1478c0" strokeWidth="2" strokeDasharray="14 2 9 1" />
    <path d="M473 1h200" stroke="#555" strokeDasharray="9 3 6 4 11 3" />
    <path d="M1286 1h182" stroke="#222" strokeDasharray="2 12 3 9 4 5" strokeWidth="2" />
  </svg>
);

const ProteusLogo = () => (
  <svg width="16" height="16" viewBox="0 0 16 16">
    <path d="M1 1l4 4M15 1l-4 4M1 15l4-4M15 15l-4-4" stroke="#6b7f96" strokeWidth="1.500" strokeDasharray="2 1" />
    <circle cx="7.500" cy="8" r="4.800" fill="#33517c" stroke="#1e2c42" />
    <circle cx="6.500" cy="6.500" r="2" fill="#6f90ba" />
    <path d="M0 1h2M14 1h2" stroke="#d49a50" />
  </svg>
);

const App = () => (
  <div className="flex h-screen flex-col overflow-hidden bg-[#b9d0ea] text-black">
    <BackgroundEdge />
    <header className="flex h-[30px] shrink-0 items-center gap-1 border-t border-[#2a3440] bg-linear-to-b from-[#99b3d1] to-[#b9d1eb] pt-1.5 pl-1.5 shadow-[inset_0_1px_0_#fff]">
      <ProteusLogo />
      <h1 className="font-['Noto_Sans','Noto_Sans_CJK_SC',sans-serif] text-[12px] leading-4">
        仿真 - Proteus 8 Professional - Schematic Capture
      </h1>
    </header>

    <div className="flex min-h-0 flex-1 flex-col border-l-4 border-[#b9d0ea] bg-linear-to-r from-[#e1e8ee] to-[#edf4fb]">
      <nav className="flex h-[19px] shrink-0 items-center gap-px border-b border-[#b5b9c9] bg-[linear-gradient(to_bottom,#ffffff_0,#e9edf6_7px,#d5dbef_7px,#e1e4f4_100%)] pt-px font-['Noto_Sans',sans-serif] text-[12px] leading-4">
        {menus.map((m) => (
          <button key={m} className="px-[7px]">
            {m}
          </button>
        ))}
      </nav>

      <div className="flex shrink-0 gap-[5px] pt-0.5">
        {toolbars.map((items, i) => (
          <Toolbar key={i} items={items} />
        ))}
      </div>

      {/* Pestañas */}
      <div className="flex h-[29px] shrink-0 items-end">
        <svg width="22" height="25" viewBox="0 0 22 25" className="shrink-0">
          <path d="M0 22L21 .5h1V25H0z" fill="#d2e8f2" />
          <path d="M0 22L21 .5h1" fill="none" stroke="#6ea2c0" />
        </svg>
        <div className="flex h-[25px] items-center gap-0.5 border-t border-r border-[#6ea2c0] bg-linear-to-b from-[#e4f1f7] to-[#c2e0ef] pr-2.5">
          <svg width="15" height="16" viewBox="0 0 16 16">{icons.schematic}</svg>
          <span className="font-['Liberation_Sans',Arial,sans-serif] text-[12px] leading-4 font-bold text-[#1f4a68]">
            Schematic Capture
          </span>
          <button aria-label="Close" className="pl-[5px]">
            <svg width="12" height="12" viewBox="0 0 12 12">
              <path d="M1 1l10 10M11 1L1 11" stroke="#5a6670" strokeWidth="2" />
            </svg>
          </button>
        </div>
        <div className="flex-1 self-stretch border-b border-[#6ea2c0]" />
      </div>
      <div className="h-1.5 shrink-0 bg-linear-to-b from-[#c2e0ef] to-[#aed2e6]" />

      <main className="flex min-h-0 flex-1">
        <ModeBar />
        <DevicePanel />
        <div className="w-1 shrink-0 bg-[#b4d4e6]" />
        <div className="relative min-w-0 flex-1 overflow-hidden border-y border-l border-[#6e6e6e] bg-[#deded0]">
          <Schematic />
          <VirtualTerminal />
        </div>
      </main>

      <StatusBar />
    </div>

    <div className="mt-1.5 h-0.5 shrink-0 border-t border-[#10c0e0] bg-black" />
  </div>
);

export default App;
